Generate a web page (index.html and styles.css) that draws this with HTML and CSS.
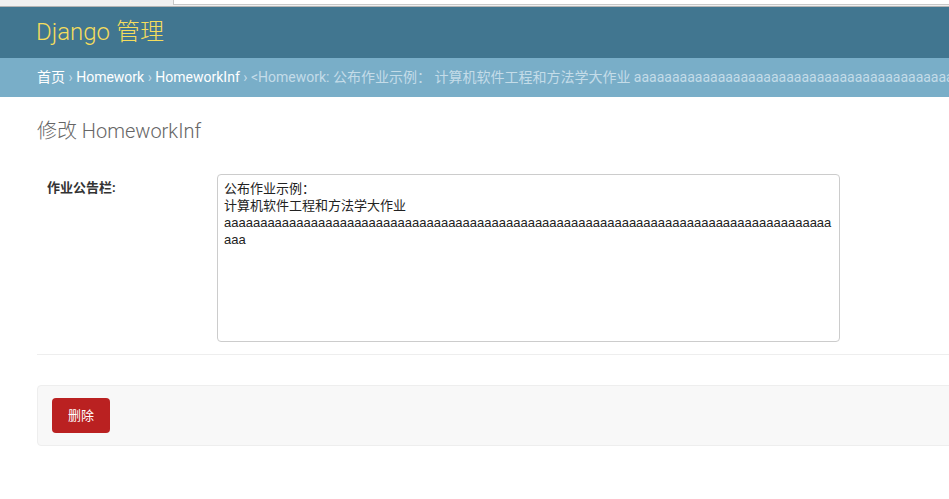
FILE: index.html
```html
<!DOCTYPE html>
<html lang="zh-CN">
<head>
<meta charset="utf-8">
<title>修改 HomeworkInf | Django 站点管理员</title>
<link rel="stylesheet" href="styles.css">
</head>
<body>
<div class="page">
  <div class="topstrip"><div class="topbox"></div></div>
  <header class="header">
    <h1 class="branding">Django 管理</h1>
  </header>
  <nav class="breadcrumbs">
    <a href="#">首页</a> › <a href="#">Homework</a> › <a href="#">HomeworkInf</a> › &lt;Homework: 公布作业示例： 计算机软件工程和方法学大作业 aaaaaaaaaaaaaaaaaaaaaaaaaaaaaaaaaaaaaaaaaaaaaaaaaaaaaaaaaaaaaaaaaaaaaaaaaaaaaaaaaaaaaaaaaaa
  </nav>
  <main class="content">
    <h1 class="title">修改 HomeworkInf</h1>
    <form class="form">
      <div class="form-row">
        <label class="field-label" for="id_inf">作业公告栏:</label>
        <textarea id="id_inf" class="field-text" wrap="off">公布作业示例：
计算机软件工程和方法学大作业
aaaaaaaaaaaaaaaaaaaaaaaaaaaaaaaaaaaaaaaaaaaaaaaaaaaaaaaaaaaaaaaaaaaaaaaaaaaaaaaaaaaa
aaa</textarea>
      </div>
      <div class="submit-row">
        <a href="#" class="deletelink">删除</a>
      </div>
    </form>
  </main>
</div>
</body>
</html>
```

FILE: styles.css
```css
html, body {
  margin: 0;
  padding: 0;
  overflow: hidden;
  background: #fff;
}

body {
  font-family: Roboto, "Noto Sans CJK SC", "DejaVu Sans", sans-serif;
  font-size: 14px;
  color: #333;
}

.page {
  width: 1300px;
}

.topstrip {
  height: 6px;
  background: #f0f0f0;
  border-bottom: 1px solid #b4b4b4;
  display: flex;
}

.topbox {
  margin-left: 173px;
  flex: 1;
  height: 4px;
  background: #fff;
  border-left: 1px solid #c8c8c8;
  border-bottom: 1px solid #c8c8c8;
}

.header {
  background: #417690;
  padding: 10px 36px;
  height: 31px;
  display: flex;
  align-items: center;
}

.branding {
  margin: 0;
  font-size: 24px;
  font-weight: 300;
  line-height: 31px;
  color: #f5dd5d;
}

.breadcrumbs {
  background: #79aec8;
  padding: 10px 37px;
  font-size: 14px;
  line-height: 19px;
  color: #c4dce8;
  white-space: nowrap;
  overflow: hidden;
}

.breadcrumbs a {
  color: #fff;
  text-decoration: none;
}

.content {
  padding: 20px 0 20px 37px;
}

.title {
  margin: 0 0 19px;
  font-size: 20px;
  font-weight: 300;
  line-height: 28px;
  color: #666;
}

.form-row {
  display: flex;
  align-items: flex-start;
  padding: 10px 10px 12px;
  border-bottom: 1px solid #eee;
}

.field-label {
  width: 160px;
  padding: 7px 10px 0 0;
  font-size: 13px;
  font-weight: bold;
  line-height: 1;
  color: #333;
}

.field-text {
  width: 623px;
  height: 168px;
  box-sizing: border-box;
  margin: 0;
  padding: 5px 6px;
  border: 1px solid #ccc;
  border-radius: 4px;
  font-family: "Liberation Sans", "Noto Sans CJK SC", sans-serif;
  font-size: 13px;
  line-height: 17px;
  color: #222;
  resize: none;
  overflow: hidden;
  background: #fff;
}

.submit-row {
  margin-top: 30px;
  padding: 12px 14px;
  background: #f8f8f8;
  border: 1px solid #eee;
  border-radius: 4px;
  display: flex;
}

.deletelink {
  display: block;
  padding: 10px 16px;
  line-height: 15px;
  font-size: 13px;
  background: #ba2121;
  color: #fff;
  border-radius: 4px;
  text-decoration: none;
}
```
